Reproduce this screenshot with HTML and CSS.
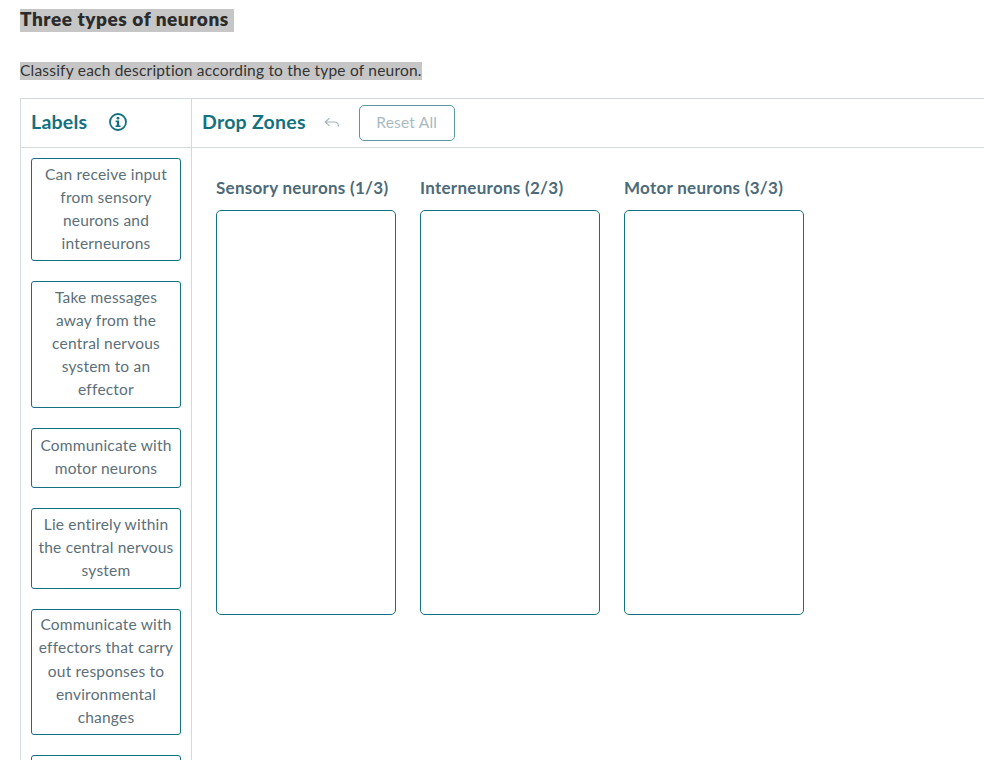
FILE: index.html
```html
<!DOCTYPE html>
<html lang="en">
<head>
<meta charset="utf-8">
<title>Three types of neurons</title>
<link rel="stylesheet" href="styles.css">
</head>
<body>
<main class="page">
  <h1 class="title"><span class="hl hl-title">Three types of neurons&nbsp;</span></h1>
  <p class="intro"><span class="hl hl-intro">Classify each description according to the type of neuron.</span></p>
  <section class="board">
    <div class="labels-col">
      <header class="head labels-head">
        <h2 class="head-title">Labels</h2>
        <svg class="info" viewBox="0 0 18 18" width="18" height="18" aria-hidden="true">
          <circle cx="9" cy="9" r="8" fill="none" stroke="#13717f" stroke-width="1.8"/>
          <circle cx="9" cy="5.2" r="1.4" fill="#13717f"/>
          <path d="M6.6 7.4H10.2V12.4H11.5V14H6.5V12.4H7.8V9H6.6Z" fill="#13717f"/>
        </svg>
      </header>
      <div class="cards">
        <div class="card">Can receive input from sensory neurons and interneurons</div>
        <div class="card">Take messages away from the central nervous system to an effector</div>
        <div class="card">Communicate with motor neurons</div>
        <div class="card card-three">Lie entirely within the central nervous system</div>
        <div class="card">Communicate with effectors that carry out responses to environmental changes</div>
        <div class="card"></div>
      </div>
    </div>
    <div class="zones-col">
      <header class="head zones-head">
        <h2 class="head-title">Drop Zones</h2>
        <svg class="undo" viewBox="0 0 16 12" width="16" height="12" aria-hidden="true">
          <path d="M5.5 1.2 1.2 5 5.5 8.8M1.2 5H10.5C13 5 14.4 6.6 14.6 9.5" fill="none" stroke="#a3b3ba" stroke-width="1.1"/>
        </svg>
        <button class="reset" type="button">Reset All</button>
      </header>
      <div class="zones">
        <div class="zone"><h3 class="zone-title">Sensory neurons (1/3)</h3><div class="drop"></div></div>
        <div class="zone"><h3 class="zone-title">Interneurons (2/3)</h3><div class="drop"></div></div>
        <div class="zone"><h3 class="zone-title">Motor neurons (3/3)</h3><div class="drop"></div></div>
      </div>
    </div>
  </section>
</main>
</body>
</html>
```
FILE: styles.css
```css
* { box-sizing: border-box; }
html, body { margin: 0; background: #fff; }
body { font-family: Lato, "Open Sans", sans-serif; color: #2f2f2f; overflow: hidden; }
.page { width: 984px; height: 760px; overflow: hidden; padding: 9px 0 0 20px; }
.hl { display: block; width: fit-content; background: #c6c6c6; }
.hl-title { height: 23px; line-height: 20px; }
.hl-intro { height: 18px; line-height: 16px; }
.title { margin: 0; font-size: 19px; font-weight: 800; letter-spacing: .55px; color: #2b2b2b; height: 23px; }
.intro { margin: 30px 0 0; font-size: 15.5px; letter-spacing: .21px; height: 18px; color: #333; }
.board { display: flex; margin-top: 18px; width: 980px; border-top: 1px solid #d3dade; border-left: 1px solid #d3dade; height: 700px; }
.labels-col { flex: 0 0 171px; border-right: 1px solid #d3dade; }
.zones-col { flex: 1; }
.head { height: 49px; display: flex; align-items: center; border-bottom: 1px solid #d3dade; padding-left: 10px; }
.head-title { margin: 0 0 2px; font-size: 19.5px; line-height: 24px; font-weight: 700; letter-spacing: .25px; color: #13717f; }
.info { margin: 0 0 3px 22px; }
.undo { margin-left: 18px; }
.reset { margin-left: 19px; width: 96px; height: 36px; padding: 0 0 3px; border: 1px solid #5b97a3; border-radius: 5px; background: #fff; color: #a9bac1; font: 400 15.5px Lato, sans-serif; letter-spacing: .22px; }
.cards { display: flex; flex-direction: column; gap: 20px; padding: 10px 10px 0; }
.card { flex: none; width: 150px; min-height: 60px; padding: 3.5px 5px 5.5px; display: flex; align-items: center; justify-content: center; text-align: center; border: 1px solid #13717f; border-radius: 3px; font-size: 15.5px; line-height: 23.1px; letter-spacing: .2px; color: #5c6f79; }
.card-three { min-height: 81px; }
.zones { display: flex; gap: 24px; padding: 29px 0 0 24px; }
.zone { width: 180px; }
.zone-title { margin: 0 0 11px; font-size: 17px; line-height: 22px; font-weight: 700; letter-spacing: .28px; color: #4c6a78; white-space: nowrap; }
.drop { height: 405px; border: 1px solid #13717f; border-radius: 5px; }
```
